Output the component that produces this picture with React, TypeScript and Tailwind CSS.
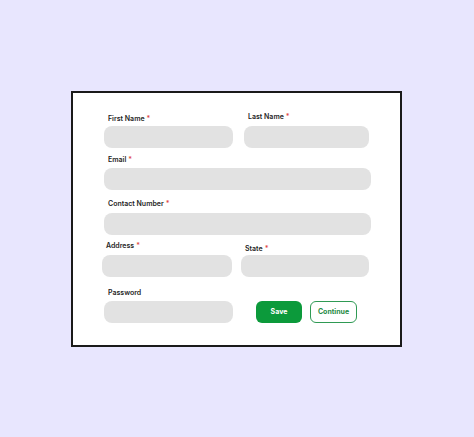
const labelCls =
  "block text-[7px] leading-[8px] font-semibold text-[#1f1f1f] pl-1";

function Label({ text, req = true, mb }: { text: string; req?: boolean; mb: string }) {
  return (
    <label className={`${labelCls} ${mb}`}>
      {text}
      {req && <span className="text-[#e0473f] ml-[2px]">*</span>}
    </label>
  );
}

function Input({ className = "" }: { className?: string }) {
  return (
    <div className={`h-[22px] rounded-[8px] bg-[#e2e2e2] ${className}`} />
  );
}

export default function App() {
  return (
    <div
      className="w-[474px] h-[437px] bg-[#e8e6fe] pt-[91px] pl-[71px]"
      style={{ fontFamily: "Inter, 'Noto Sans', sans-serif" }}
    >
      <div className="w-[331px] h-[256px] bg-white border-2 border-[#1a1a1a] pt-[22px] pl-[31px]">
        <div className="w-[267px]">
          {/* row 1 */}
          <div className="grid grid-cols-[129px_125px] gap-x-[11px]">
            <div>
              <Label text="First Name" mb="mb-[3px]" />
              <Input />
            </div>
            <div>
              <Label text="Last Name" mb="mb-[3px] -mt-[2px] pb-[2px]" />
              <Input />
            </div>
          </div>

          {/* email */}
          <div className="mt-[8px]">
            <Label text="Email" mb="mb-[4px]" />
            <Input />
          </div>

          {/* contact */}
          <div className="mt-[10px]">
            <Label text="Contact  Number" mb="mb-[5px]" />
            <Input />
          </div>

          {/* row 4 */}
          <div className="mt-[7px] grid grid-cols-[130px_128px] gap-x-[9px] -ml-[2px]">
            <div>
              <Label text="Address" mb="mb-[5px]" />
              <Input />
            </div>
            <div>
              <Label text="State" mb="mb-[2px] mt-[3px]" />
              <Input />
            </div>
          </div>

          {/* row 5 */}
          <div className="mt-[12px] grid grid-cols-[129px_138px] gap-x-[11px]">
            <div>
              <Label text="Password" req={false} mb="mb-[4px]" />
              <Input />
            </div>
            <div className="flex items-end gap-[8px] pl-[12px]">
              <button className="w-[46px] h-[22px] rounded-[6px] bg-[#0c9a3b] text-white text-[7px] font-bold">
                Save
              </button>
              <button className="w-[47px] h-[22px] rounded-[6px] bg-white border-[1.5px] border-[#2f9a54] text-[#1f8a45] text-[7px] font-bold">
                Continue
              </button>
            </div>
          </div>
        </div>
      </div>
    </div>
  );
}
